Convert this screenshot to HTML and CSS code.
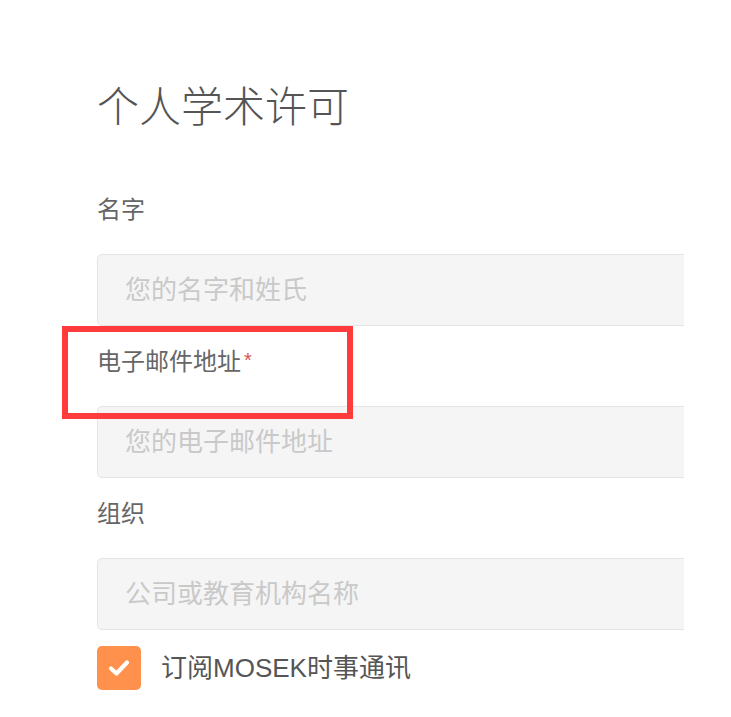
FILE: index.html
```html
<!DOCTYPE html>
<html lang="zh-CN">
<head>
<meta charset="utf-8">
<title>个人学术许可</title>
<link rel="stylesheet" href="styles.css">
</head>
<body>
<main class="page">
  <h1 class="title">个人学术许可</h1>
  <form class="form">
    <div class="field">
      <label class="label" for="name">名字</label>
      <input class="input" id="name" type="text" placeholder="您的名字和姓氏">
    </div>
    <div class="field field-highlight">
      <label class="label" for="email">电子邮件地址<span class="req">*</span></label>
      <input class="input" id="email" type="email" placeholder="您的电子邮件地址">
      <div class="annot"></div>
    </div>
    <div class="field">
      <label class="label" for="org">组织</label>
      <input class="input" id="org" type="text" placeholder="公司或教育机构名称">
    </div>
    <label class="check">
      <span class="box">
        <svg width="22" height="18" viewBox="0 0 22 18"><path d="M3 9.5 L8.5 14.5 L19 3.5" fill="none" stroke="#fff" stroke-width="4.2" stroke-linecap="round" stroke-linejoin="round"/></svg>
      </span>
      <span class="check-text">订阅MOSEK时事通讯</span>
    </label>
  </form>
</main>
</body>
</html>
```

FILE: styles.css
```css
* { box-sizing: border-box; }
html, body {
  margin: 0;
  padding: 0;
  background: #fff;
}
body {
  font-family: "Liberation Sans", "Noto Sans CJK SC", sans-serif;
  color: #555;
}
.page {
  width: 684px;
  padding: 83px 0 0 97px;
  overflow: hidden;
}
.title {
  margin: 0;
  font-size: 42px;
  font-weight: 300;
  line-height: 50px;
  color: #555;
}
.form {
  margin-top: 59px;
  display: flex;
  flex-direction: column;
}
.field {
  display: flex;
  flex-direction: column;
  position: relative;
}
.field + .field { margin-top: 18px; }
.label {
  font-size: 24px;
  line-height: 36px;
  height: 36px;
  color: #666;
  font-weight: 400;
}
.req {
  color: #d9534f;
  font-size: 20px;
  line-height: 0;
  margin-left: 3px;
  position: relative;
  top: -3px;
}
.input {
  margin-top: 26px;
  width: 620px;
  height: 72px;
  border: 1px solid #e4e4e4;
  border-radius: 5px;
  background: #f5f5f5;
  padding: 0 27px;
  font-family: inherit;
  font-size: 26px;
  color: #555;
  outline: none;
}
.input::placeholder { color: #c9c9c9; }
.annot {
  position: absolute;
  left: -35px;
  top: -18px;
  width: 291px;
  height: 93px;
  border: 6px solid #ff3b3b;
  pointer-events: none;
}
.check {
  margin-top: 16px;
  display: flex;
  align-items: center;
  gap: 20px;
}
.box {
  width: 44px;
  height: 44px;
  border-radius: 5px;
  background: #ff914d;
  display: flex;
  align-items: center;
  justify-content: center;
}
.check-text {
  font-size: 26px;
  color: #555;
  line-height: 44px;
}
```
